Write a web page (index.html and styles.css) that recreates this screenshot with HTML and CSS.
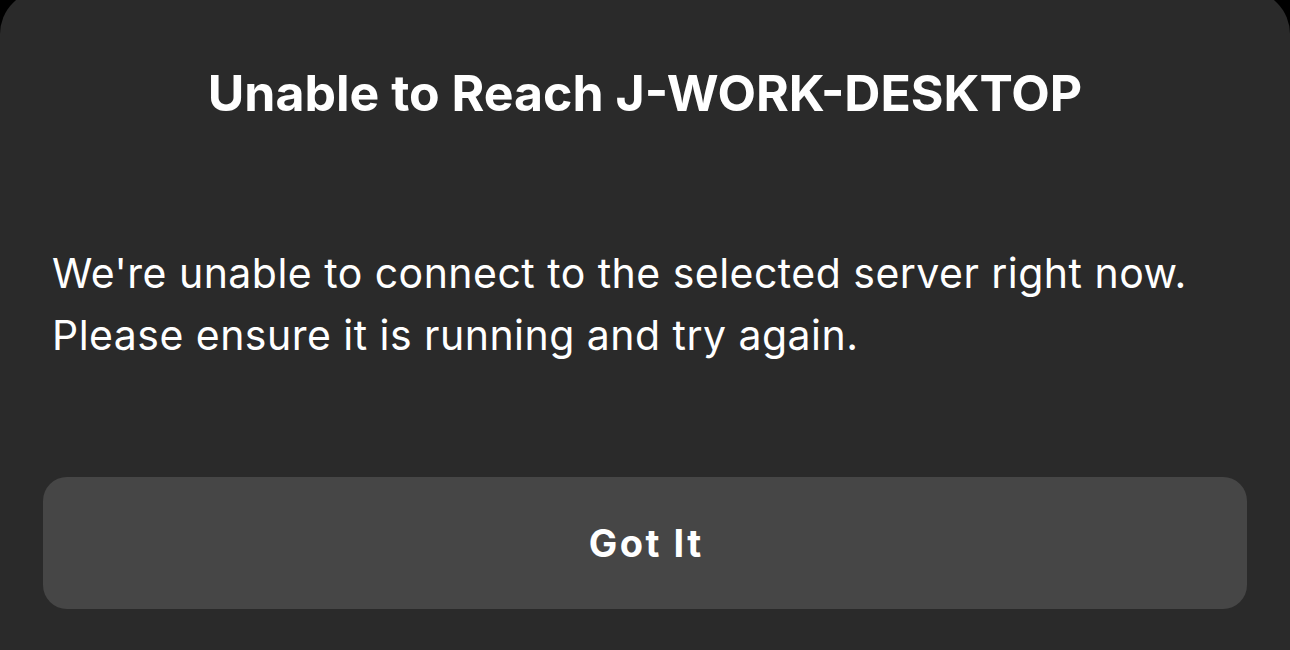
FILE: index.html
```html
<!DOCTYPE html>
<html lang="en">
<head>
<meta charset="utf-8">
<title>Unable to Reach</title>
<link rel="stylesheet" href="styles.css">
</head>
<body>
<div class="sheet">
  <h1 class="title">Unable to Reach J-WORK-DESKTOP</h1>
  <p class="message">We're unable to connect to the selected server right now.<br>Please ensure it is running and try again.</p>
  <div class="actions">
    <button class="btn" type="button">Got It</button>
  </div>
</div>
</body>
</html>
```

FILE: styles.css
```css
html, body {
  margin: 0;
  padding: 0;
  background: #000;
  height: 650px;
  overflow: hidden;
}

.sheet {
  margin-top: -10px;
  height: 660px;
  background: #2a2a2a;
  border-radius: 44px 44px 0 0;
  padding-top: 73px;
  box-sizing: border-box;
  font-family: Inter, "Noto Sans", sans-serif;
  color: #fff;
  overflow: hidden;
}

.title {
  margin: 0;
  text-align: center;
  font-size: 50px;
  font-weight: 700;
  line-height: 61px;
  letter-spacing: 0;
}

.message {
  margin: 118px 0 0 0;
  padding: 0 52px;
  font-size: 41px;
  font-weight: 400;
  line-height: 62px;
  letter-spacing: 0.47px;
}

.actions {
  margin-top: 111px;
  padding: 0 43px;
}

.btn {
  display: flex;
  align-items: center;
  justify-content: center;
  width: 100%;
  height: 132px;
  border: none;
  border-radius: 24px;
  background: #464646;
  color: #fff;
  font-family: Inter, "Noto Sans", sans-serif;
  font-size: 38px;
  font-weight: 700;
  letter-spacing: 2.5px;
  padding: 0 0 0 2.5px;
}
```
